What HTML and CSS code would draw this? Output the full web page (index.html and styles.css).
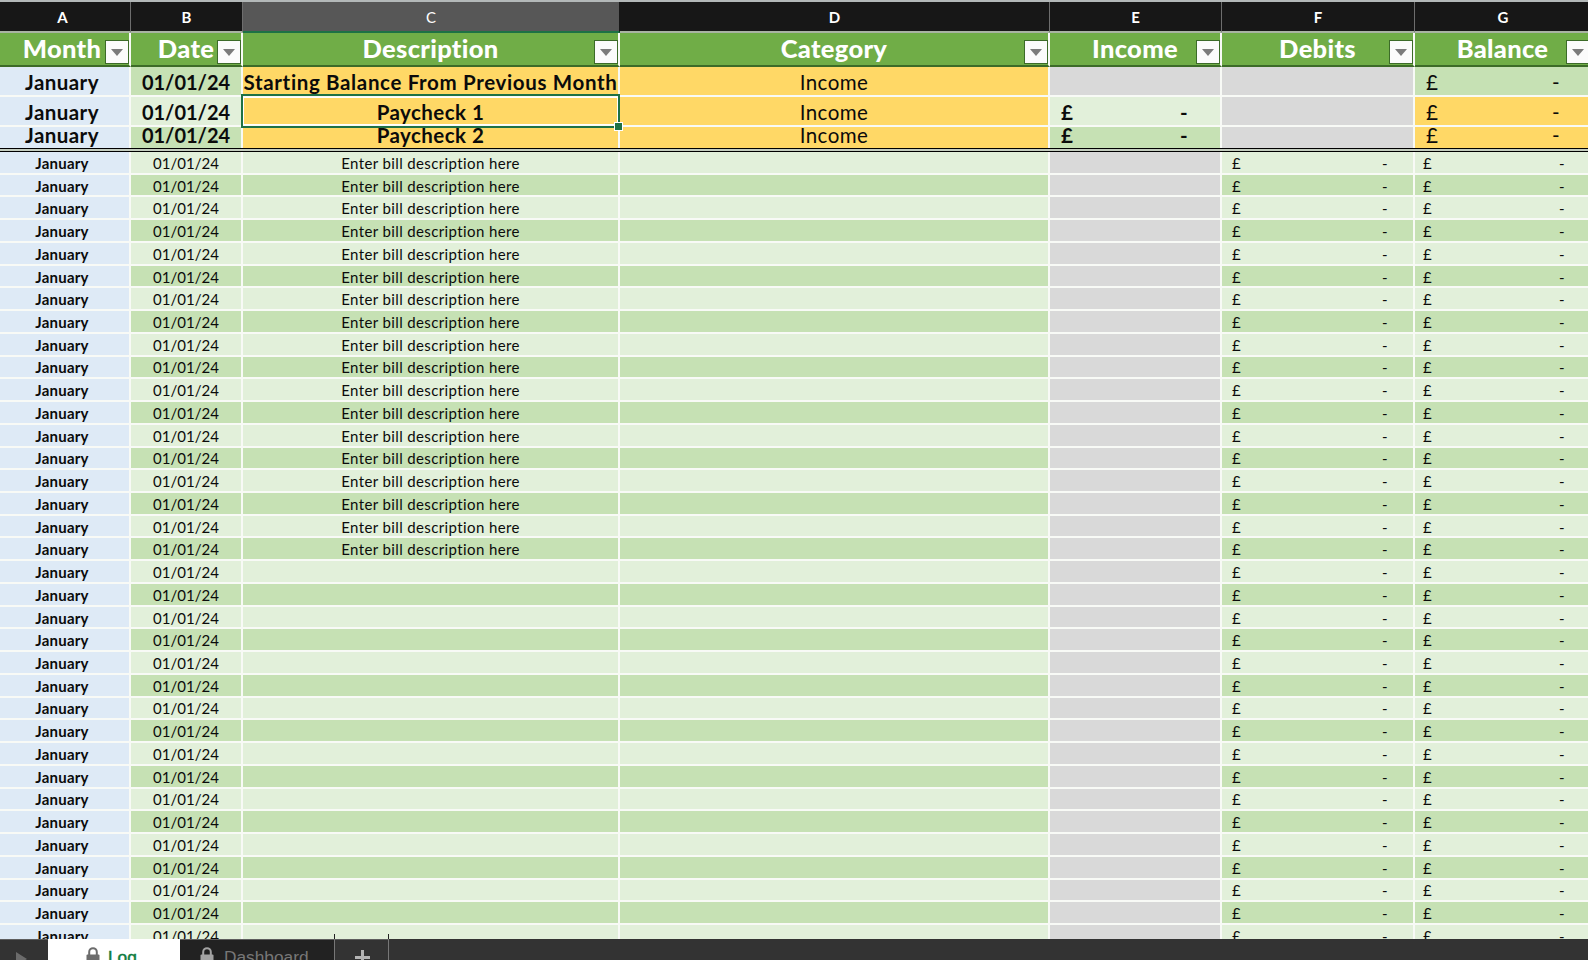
FILE: index.html
```html
<!DOCTYPE html>
<html lang="en">
<head>
    <meta charset="UTF-8">
    <meta name="viewport" content="width=device-width, initial-scale=1.0">
    <title>Budget Log</title>
    <link rel="stylesheet" href="styles.css">
</head>
<body>
    <div class="workbook">
        <div class="sheet">
            <div class="row letters">
                <div class="cell">A</div>
                <div class="cell">B</div>
                <div class="cell selected">C</div>
                <div class="cell">D</div>
                <div class="cell">E</div>
                <div class="cell">F</div>
                <div class="cell">G</div>
            </div>
            <div class="row titles" id="titles"></div>
            <div class="row income">
                <div class="cell month">January</div>
                <div class="cell date dark">01/01/24</div>
                <div class="cell gold strong long">Starting Balance From Previous Month</div>
                <div class="cell gold">Income</div>
                <div class="cell grey"></div>
                <div class="cell grey"></div>
                <div class="cell money dark"><span>£</span><span>-</span></div>
            </div>
            <div class="row income">
                <div class="cell month">January</div>
                <div class="cell date light">01/01/24</div>
                <div class="cell gold strong active">Paycheck 1<i class="handle"></i></div>
                <div class="cell gold">Income</div>
                <div class="cell money light strong"><span>£</span><span>-</span></div>
                <div class="cell grey"></div>
                <div class="cell money gold"><span>£</span><span>-</span></div>
            </div>
            <div class="row income income-last">
                <div class="cell month">January</div>
                <div class="cell date dark">01/01/24</div>
                <div class="cell gold strong">Paycheck 2</div>
                <div class="cell gold">Income</div>
                <div class="cell money dark strong"><span>£</span><span>-</span></div>
                <div class="cell grey"></div>
                <div class="cell money gold"><span>£</span><span>-</span></div>
            </div>
            <div class="divider"></div>
            <div class="bills" id="bills"></div>
        </div>

        <div class="tabs">
            <div class="tab-nav">
                <svg width="12" height="14" viewBox="0 0 12 14"><path d="M0 0L11 7L0 14Z" fill="#6b6b6b"/></svg>
            </div>
            <div class="tab current">
                <svg class="lock" width="14" height="18" viewBox="0 0 14 18"><path d="M3.2 9V5a3.8 3.8 0 0 1 7.6 0v4" fill="none" stroke="currentColor" stroke-width="2"/><rect x="0.5" y="7.5" width="13" height="10" rx="1" fill="currentColor"/></svg>
                <span>Log</span>
            </div>
            <div class="tab">
                <svg class="lock" width="14" height="18" viewBox="0 0 14 18"><path d="M3.2 9V5a3.8 3.8 0 0 1 7.6 0v4" fill="none" stroke="currentColor" stroke-width="2"/><rect x="0.5" y="7.5" width="13" height="10" rx="1" fill="currentColor"/></svg>
                <span>Dashboard</span>
            </div>
            <div class="tab-add">
                <svg width="15" height="15" viewBox="0 0 15 15"><path d="M7.5 0V15M0 7.5H15" stroke="#b4b4b4" stroke-width="3"/></svg>
            </div>
        </div>
    </div>

    <script>
        const titles = ['Month', 'Date', 'Description', 'Category', 'Income', 'Debits', 'Balance'];
        const billRows = 35;
        const describedRows = 18;

        document.getElementById('titles').innerHTML = titles.map(title => `
            <div class="cell">${title}<button class="filter" title="Filter"><svg width="12" height="7" viewBox="0 0 12 7"><path d="M0 0H12L6 7Z" fill="#7b7b7b"/></svg></button></div>
        `).join('');

        function createBillRow(index) {
            const shade = index % 2 ? 'dark' : 'light';
            const text = index < describedRows ? 'Enter bill description here' : '';
            return `
                <div class="row bill">
                    <div class="cell month">January</div>
                    <div class="cell date ${shade}">01/01/24</div>
                    <div class="cell ${shade}">${text}</div>
                    <div class="cell ${shade}"></div>
                    <div class="cell grey"></div>
                    <div class="cell money ${shade}"><span>£</span><span>-</span></div>
                    <div class="cell money ${shade}"><span>£</span><span>-</span></div>
                </div>
            `;
        }

        document.getElementById('bills').innerHTML =
            Array.from({ length: billRows }, (_, i) => createBillRow(i)).join('');
    </script>
</body>
</html>
```

FILE: styles.css
```css
* {
    margin: 0;
    padding: 0;
    box-sizing: border-box;
}

body {
    font-family: Lato, "Liberation Sans", sans-serif;
    color: #0b0b0b;
    overflow: hidden;
}

.workbook {
    width: 100vw;
    height: 960px;
    display: flex;
    flex-direction: column;
    overflow: hidden;
}

.sheet {
    height: 939px;
    flex: none;
    overflow: hidden;
    border-top: 2px solid #b3b8b8;
}

.row {
    display: grid;
    grid-template-columns: 131px 112px 377px 430px 172px 193px 177px;
    grid-template-rows: 100%;
    width: 1592px;
}

.cell {
    display: flex;
    align-items: center;
    justify-content: center;
    white-space: nowrap;
    border-right: 2px solid #f8faf6;
    border-bottom: 2px solid #f8faf6;
    min-width: 0;
    min-height: 0;
}

/* column A is scrolled slightly past the left edge */
.cell:first-child {
    padding-right: 5px;
}

.letters {
    height: 31px;
}

.letters .cell {
    background: #171717;
    color: #fff;
    font-size: 15px;
    font-weight: 700;
    border-right: 1px solid #6d6d6d;
    border-bottom: 2px solid #a9b3a3;
}

.letters .selected {
    background: #575757;
    border-right-color: #171717;
    border-bottom-color: #1e7145;
    font-weight: 400;
}

.titles {
    height: 34px;
}

.titles .cell {
    position: relative;
    background: #70ad47;
    color: #fff;
    font-size: 25.5px;
    font-weight: 900;
    letter-spacing: 0.3px;
    line-height: 28px;
    padding-bottom: 3px;
    border-bottom: 2px solid #3c6b28;
}

.filter {
    position: absolute;
    right: 0;
    bottom: 1px;
    width: 24px;
    height: 24px;
    display: flex;
    align-items: center;
    justify-content: center;
    background: #fbfbfb;
    border: 1px solid #3c6b28;
}

.month {
    background: #deeaf6;
    font-weight: 700;
}

.light {
    background: #e2f0da;
}

.dark {
    background: #c6e1b4;
}

.gold {
    background: #ffd866;
}

.grey {
    background: #d9d9d9;
}

.income {
    height: 30px;
    font-size: 20.5px;
    letter-spacing: 0.45px;
}

.income .cell {
    padding-top: 1px;
}

.income .date,
.strong {
    font-weight: 700;
}

.income .date {
    font-size: 20px;
    letter-spacing: 0;
}

.income .long {
    letter-spacing: 0.65px;
}

.income-last {
    height: 21px;
}

.income-last .cell {
    border-bottom: none;
    padding: 0 0 6px;
}

.income-last .month {
    padding-right: 5px;
}

.income .money {
    justify-content: space-between;
    padding-left: 11px;
    padding-right: 32px;
}

.income .money:last-child {
    padding-right: 30px;
}

.active {
    position: relative;
    box-shadow: inset 0 0 0 1px #fff;
}

.active::before {
    content: "";
    position: absolute;
    inset: -3px -2px -3px -2px;
    border: 2px solid #1e7145;
    z-index: 1;
}

.handle {
    position: absolute;
    right: -5px;
    bottom: -6px;
    width: 9px;
    height: 9px;
    background: #1e7145;
    border: 1px solid #fff;
    z-index: 2;
}

.divider {
    height: 4px;
    background: #c4cdbf;
    border-top: 1px solid #000;
    border-bottom: 1px solid #000;
}

.bill {
    height: 22.74px;
    font-size: 15px;
    letter-spacing: 0.38px;
}

.bill .cell {
    padding-top: 1px;
}

.bill .month {
    letter-spacing: 0.25px;
}

.bill .date {
    letter-spacing: 0;
}

.bill .money {
    justify-content: space-between;
    padding-left: 10px;
    padding-right: 25px;
}

.bill .money:last-child {
    padding-left: 8px;
}

.tabs {
    flex: none;
    height: 42px;
    display: flex;
    background: #333;
    font-family: "Liberation Sans", Arial, sans-serif;
    font-size: 17.3px;
}

.tab-nav {
    width: 48px;
    border-top: 1px solid #5e5e5e;
    padding: 10px 0 0 16px;
}

.tab {
    width: 155px;
    display: flex;
    align-items: flex-start;
    gap: 10px;
    padding: 7px 0 0 20px;
    background: #222;
    color: #a3a3a3;
    border-top: 1px solid #5e5e5e;
}

.tab span {
    color: #777;
}

.current {
    width: 132px;
    padding-left: 38px;
    gap: 8px;
    background: #fff;
    color: #6c6c6c;
    border-top-color: #fff;
}

.current span {
    color: #107c41;
    -webkit-text-stroke: 0.5px #107c41;
}

.tab-add {
    position: relative;
    width: 54px;
    padding: 9px 0 0 20px;
    border-top: 1px solid #5e5e5e;
}

/* separators rise a little above the tab bar */
.tab-add::before,
.tab-add::after {
    content: "";
    position: absolute;
    top: -6px;
    width: 1px;
    height: 30px;
    background: linear-gradient(#222 5px, #777 5px);
}

.tab-add::before {
    left: -1px;
}

.tab-add::after {
    right: 0;
}
```
